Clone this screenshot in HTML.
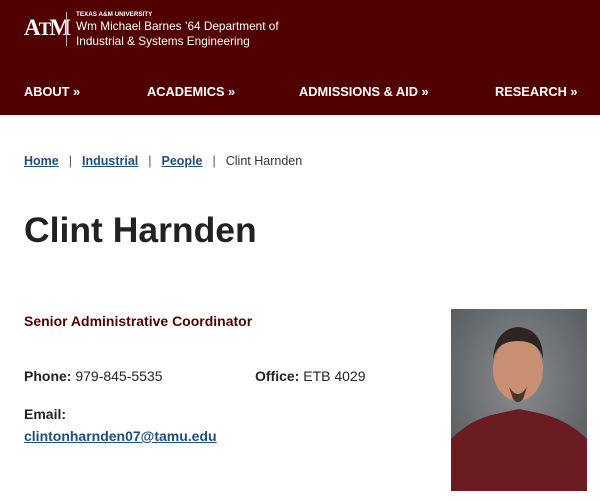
<!DOCTYPE html>
<html><head><style>
*{margin:0;padding:0;box-sizing:border-box}
body{width:600px;height:500px;overflow:hidden;background:#fff;font-family:"Liberation Sans",sans-serif;color:#222;position:relative}
.hdr{position:absolute;left:0;top:0;width:600px;height:115px;background:#500000}
.abs{position:absolute}
.nav{color:#fff;font-weight:bold;font-size:12.8px;top:84px}
a{color:#1f4e79;text-decoration:underline;font-weight:bold}
</style></head><body>
<div class="hdr">
 <div class="abs" style="left:24px;top:14px;color:#fff;font-family:'Liberation Serif',serif;font-weight:bold;font-size:23px;letter-spacing:-2px;line-height:28px">A<span style="font-size:19px">T</span>M</div>
 <div class="abs" style="left:66px;top:12px;width:1px;height:34px;background:#c9a9a9"></div>
 <div class="abs" style="left:76px;top:11px;color:#fff;font-size:6.3px;font-weight:bold">TEXAS A&amp;M UNIVERSITY</div>
 <div class="abs" style="left:76px;top:19px;color:#fff;font-size:11.8px;line-height:15px">Wm Michael Barnes ’64 Department of<br>Industrial &amp; Systems Engineering</div>
 <div class="abs nav" style="left:24px">ABOUT »</div>
 <div class="abs nav" style="left:147px">ACADEMICS »</div>
 <div class="abs nav" style="left:299px">ADMISSIONS &amp; AID »</div>
 <div class="abs nav" style="left:495px">RESEARCH »</div>
</div>
<div class="abs" style="left:24px;top:154px;font-size:12.5px"><a href="#">Home</a><span style="color:#555;margin:0 10px">|</span><a href="#">Industrial</a><span style="color:#555;margin:0 10px">|</span><a href="#">People</a><span style="color:#555;margin:0 10px">|</span><span style="color:#333">Clint Harnden</span></div>
<div class="abs" style="left:24px;top:210px;font-size:35.5px;font-weight:bold;color:#222">Clint Harnden</div>
<div class="abs" style="left:24px;top:313px;font-size:14px;font-weight:bold;color:#500000">Senior Administrative Coordinator</div>
<div class="abs" style="left:24px;top:368px;font-size:14px"><b>Phone:</b> 979-845-5535</div>
<div class="abs" style="left:255px;top:368px;font-size:14px"><b>Office:</b> ETB 4029</div>
<div class="abs" style="left:24px;top:406px;font-size:14px"><b>Email:</b></div>
<div class="abs" style="left:24px;top:428px;font-size:14px"><a href="#">clintonharnden07@tamu.edu</a></div>
<svg class="abs" style="left:451px;top:309px" width="136" height="182" viewBox="0 0 136 182">
 <defs><radialGradient id="g" cx="0.5" cy="0.4" r="0.7"><stop offset="0" stop-color="#8a8c8e"/><stop offset="1" stop-color="#55585b"/></radialGradient></defs>
 <rect width="136" height="182" fill="url(#g)"/>
 <path d="M0 130 Q20 110 45 105 L68 100 L92 105 Q118 112 136 130 L136 182 L0 182Z" fill="#6b1c22"/>
 <ellipse cx="67" cy="60" rx="25" ry="32" fill="#c98f72"/>
 <path d="M42 50 Q44 20 67 18 Q92 20 92 50 Q88 32 67 32 Q46 32 42 50Z" fill="#2b2422"/>
 <path d="M58 78 Q67 92 76 78 L72 90 Q67 96 62 90Z" fill="#4a3428"/>
</svg>
</body></html>
